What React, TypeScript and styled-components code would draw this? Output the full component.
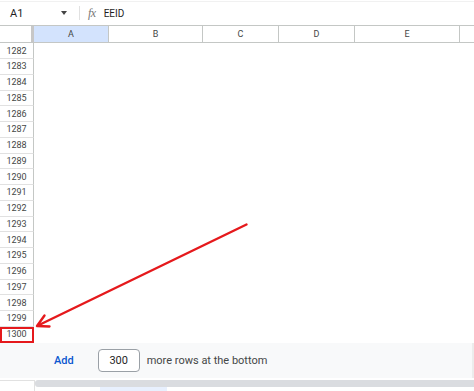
import styled, { createGlobalStyle } from 'styled-components';

const GlobalStyle = createGlobalStyle`
  html, body {
    margin: 0;
    padding: 0;
    background: #ffffff;
  }
  body {
    font-family: Roboto, 'Liberation Sans', Arial, sans-serif;
  }
`;

const colors = {
  line: '#e1e1e1',
  headerLine: '#c4c7c5',
  text: '#444746',
  selected: '#d3e3fd',
  blue: '#0b57d0',
  red: '#e5191c',
  panel: '#f8f9fa',
};

const COLS = [75, 94, 76, 76, 105];
const LETTERS = ['A', 'B', 'C', 'D', 'E'];
const ROWS = Array.from({ length: 19 }, (_, i) => 1282 + i);

const Page = styled.div`
  position: relative;
  width: 474px;
  height: 391px;
  overflow: hidden;
  display: flex;
  flex-direction: column;
  background: #fff;
`;

const FormulaBar = styled.div`
  height: 23px;
  margin-top: 1px;
  border-top: 1px solid #f1f1f1;
  border-bottom: 1px solid ${colors.headerLine};
  display: flex;
  align-items: center;
  font-size: 11px;
  color: #1f1f1f;
`;

const NameBox = styled.div`
  width: 75px;
  display: flex;
  align-items: center;
  justify-content: space-between;
  padding: 0 8px 0 10px;
  box-sizing: border-box;
`;

const Caret = styled.span`
  width: 0;
  height: 0;
  border-left: 3px solid transparent;
  border-right: 3px solid transparent;
  border-top: 4px solid #444;
`;

const Divider = styled.span`
  width: 1px;
  height: 14px;
  background: ${colors.line};
  margin: 0 8px 0 4px;
`;

const FxLabel = styled.span`
  font-family: 'Liberation Serif', serif;
  font-style: italic;
  font-size: 12px;
  color: #777;
  margin-right: 8px;
  letter-spacing: -0.5px;
`;

const FormulaText = styled.span`
  font-size: 10px;
  color: #1f1f1f;
`;

const HeaderRow = styled.div`
  height: 18px;
  display: flex;
  border-bottom: 1px solid ${colors.headerLine};
  box-sizing: border-box;
`;

const Corner = styled.div`
  width: 34px;
  flex: none;
  border-right: 3px solid #c7c7c7;
  background: #fff;
  box-sizing: border-box;
`;

const ColHead = styled.div<{ $w: number; $active?: boolean }>`
  width: ${(p) => p.$w}px;
  flex: none;
  display: flex;
  align-items: center;
  justify-content: center;
  font-size: 9px;
  color: ${colors.text};
  background: ${(p) => (p.$active ? colors.selected : '#fff')};
  border-right: 1px solid ${colors.headerLine};
  box-sizing: border-box;
`;

const ColFill = styled.div`
  flex: 1;
`;

const Body = styled.div`
  display: flex;
  flex-direction: column;
`;

const Row = styled.div`
  height: 15.75px;
  display: flex;
`;

const RowHead = styled.div<{ $marked?: boolean }>`
  width: 34px;
  flex: none;
  display: flex;
  align-items: center;
  justify-content: center;
  font-size: 9px;
  color: ${colors.text};
  border-right: 1px solid ${colors.headerLine};
  border-bottom: 1px solid ${colors.line};
  box-sizing: border-box;
  outline: ${(p) => (p.$marked ? `2px solid ${colors.red}` : 'none')};
  outline-offset: -2px;
  position: relative;
`;

const Cells = styled.div`
  flex: 1;
`;

const AddBar = styled.div`
  height: 36px;
  display: flex;
  align-items: center;
  background: ${colors.panel};
  border-right: 2px solid #ececec;
  padding-left: 54px;
  box-sizing: border-box;
`;

const AddButton = styled.span`
  color: ${colors.blue};
  font-size: 11px;
  font-weight: 500;
  margin-right: 24px;
`;

const CountBox = styled.div`
  width: 42px;
  height: 23px;
  border: 1px solid #9aa0a6;
  border-radius: 4px;
  box-sizing: border-box;
  display: flex;
  align-items: center;
  justify-content: center;
  font-size: 11px;
  color: #1f1f1f;
  background: #fff;
  margin-right: 7px;
`;

const AddText = styled.span`
  font-size: 11px;
  color: ${colors.text};
`;

const BottomStrip = styled.div`
  flex: 1;
  display: flex;
  padding-top: 2px;
`;

const ScrollGutter = styled.div`
  width: 35px;
  flex: none;
  border-top: 1px solid ${colors.line};
  border-right: 1px solid ${colors.line};
  box-sizing: border-box;
`;

const ScrollTrack = styled.div`
  flex: 1;
  display: flex;
  flex-direction: column;
`;

const ScrollBar = styled.div`
  height: 7px;
  background: #dadce0;
  border-radius: 3px 0 0 3px;
`;

const TabHint = styled.div`
  margin-left: 65px;
  width: 67px;
  height: 4px;
  background: #e8f0fe;
`;

const Overlay = styled.svg`
  position: absolute;
  left: 0;
  top: 0;
  pointer-events: none;
`;

export default function App() {
  return (
    <Page>
      <GlobalStyle />
      <FormulaBar>
        <NameBox>
          <span>A1</span>
          <Caret />
        </NameBox>
        <Divider />
        <FxLabel>fx</FxLabel>
        <FormulaText>EEID</FormulaText>
      </FormulaBar>

      <HeaderRow>
        <Corner />
        {COLS.map((w, i) => (
          <ColHead key={LETTERS[i]} $w={w} $active={i === 0}>
            {LETTERS[i]}
          </ColHead>
        ))}
        <ColFill />
      </HeaderRow>

      <Body>
        {ROWS.map((n) => (
          <Row key={n}>
            <RowHead $marked={n === 1300}>{n}</RowHead>
            <Cells />
          </Row>
        ))}
      </Body>

      <AddBar>
        <AddButton>Add</AddButton>
        <CountBox>300</CountBox>
        <AddText>more rows at the bottom</AddText>
      </AddBar>

      <BottomStrip>
        <ScrollGutter />
        <ScrollTrack>
          <ScrollBar />
          <TabHint />
        </ScrollTrack>
      </BottomStrip>

      <Overlay width="474" height="391" viewBox="0 0 474 391">
        <line x1="246.5" y1="224.5" x2="39" y2="325" stroke={colors.red} strokeWidth="2.4" strokeLinecap="round" />
        <polyline
          points="44.5,315.5 37,326 49.5,326.5"
          fill="none"
          stroke={colors.red}
          strokeWidth="2.4"
          strokeLinecap="round"
          strokeLinejoin="round"
        />
      </Overlay>
    </Page>
  );
}
